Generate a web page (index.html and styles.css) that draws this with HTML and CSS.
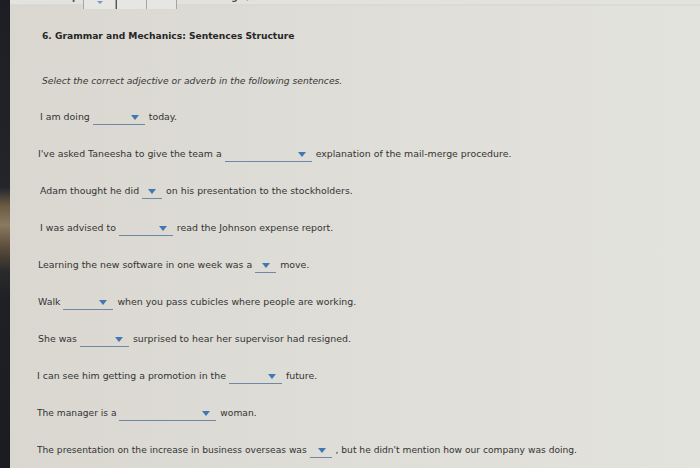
FILE: index.html
```html
<!DOCTYPE html>
<html>
<head>
<meta charset="utf-8">
<link rel="stylesheet" href="styles.css">
</head>
<body>
<div class="screen">
  <div class="bezel"></div>
  <div class="page">
    <div class="topbar">
      <div class="topinner">
        <span class="attempts">Attempts</span>
        <span class="cells"><span class="cell c1"><span class="mini"></span></span><span class="cell c2"></span><span class="cell c3"></span></span>
        <span class="average">Average / 10</span>
      </div>
    </div>
    <h1 class="title">6. Grammar and Mechanics: Sentences Structure</h1>
    <p class="instr">Select the correct adjective or adverb in the following sentences.</p>
    <div class="rows">
      <div class="row r1">I am doing <span class="dd w52"><i></i></span> today.</div>
      <div class="row r2">I've asked Taneesha to give the team a <span class="dd w87"><i></i></span> explanation of the mail-merge procedure.</div>
      <div class="row r3">Adam thought he did <span class="dd w20"><i></i></span> on his presentation to the stockholders.</div>
      <div class="row r4">I was advised to <span class="dd w54"><i></i></span> read the Johnson expense report.</div>
      <div class="row r5">Learning the new software in one week was a <span class="dd w21"><i></i></span> move.</div>
      <div class="row r6">Walk <span class="dd w50"><i></i></span> when you pass cubicles where people are working.</div>
      <div class="row r7">She was <span class="dd w49"><i></i></span> surprised to hear her supervisor had resigned.</div>
      <div class="row r8">I can see him getting a promotion in the <span class="dd w53"><i></i></span> future.</div>
      <div class="row r9">The manager is a <span class="dd w97"><i></i></span> woman.</div>
      <div class="row r10">The presentation on the increase in business overseas was <span class="dd w22"><i></i></span> , but he didn't mention how our company was doing.</div>
    </div>
  </div>
</div>
</body>
</html>
```
FILE: styles.css
```css
html, body {
  margin: 0;
  padding: 0;
  width: 700px;
  height: 468px;
  overflow: hidden;
}
.screen {
  display: flex;
  width: 700px;
  height: 468px;
  background: linear-gradient(90deg, #d9d7d0 0%, #dedcd6 40%, #e3e3de 100%);
}
.bezel {
  width: 10px;
  flex: 0 0 10px;
  background: linear-gradient(180deg, #1c1e24 0%, #23252b 40%, #6b5a44 44%, #8a7a60 48%, #5a4c3a 53%, #2a2a2c 58%, #1e2026 64%, #1a1c22 100%);
}
.page {
  flex: 1;
  padding-left: 28px;
  font-family: "DejaVu Sans", Verdana, sans-serif;
  color: #343434;
  font-size: 9px;
}
.topbar {
  height: 9px;
  overflow: hidden;
  margin-left: -28px;
  padding-left: 28px;
  background: linear-gradient(180deg, #e2e2de 0, #e2e2de 4px, #d5d4ce 5px, transparent 6px);
}
.topinner {
  display: flex;
  align-items: flex-end;
  margin-top: -7px;
  height: 16px;
}
.attempts {
  font-size: 9px;
  color: #4a4a4a;
  font-weight: bold;
  margin-left: 3px;
  width: 42px;
  line-height: 12px;
  position: relative;
  top: -6px;
}
.cells {
  display: flex;
  height: 16px;
}
.cell {
  display: block;
  height: 15px;
  border: 1px solid #a5a5a2;
  border-left: 0;
  background: #e6e6e3;
}
.c1 { width: 31px; border-left: 1px solid #a5a5a2; display: flex; justify-content: center; align-items: flex-end; }
.c2 { width: 29px; border-left: 1px solid #555; }
.c3 { width: 29px; }
.mini {
  width: 0; height: 0;
  border-left: 3px solid transparent;
  border-right: 3px solid transparent;
  border-top: 3px solid #7f95c8;
  margin-bottom: 5px;
}
.average {
  margin-left: 25px;
  font-size: 9px;
  font-weight: bold;
  color: #4a4a4a;
  line-height: 12px;
  position: relative;
  top: -6px;
}
.title {
  margin: 21px 0 0 4px;
  font-size: 9.15px;
  font-weight: bold;
  line-height: 12px;
  color: #262626;
}
.instr {
  margin: 33px 0 0 4px;
  font-style: italic;
  font-size: 9.2px;
  line-height: 12px;
  color: #383838;
}
.rows {
  display: flex;
  flex-direction: column;
  gap: 25px;
  margin-top: 24px;
}
.row {
  line-height: 12px;
  height: 12px;
  white-space: nowrap;
  font-size: 9.4px;
}
.r1, .r3, .r4 { margin-left: 2px; }
.r8, .r9, .r10 { margin-left: -1px; }
.r9, .r10 { font-size: 9.15px; }
.dd {
  display: inline-flex;
  justify-content: flex-end;
  align-items: flex-start;
  height: 8px;
  vertical-align: 0;
  border-bottom: 1px solid #6f88a6;
  padding-right: 6px;
  box-sizing: border-box;
  margin: 0 1px 0 0;
}
.dd i {
  display: block;
  width: 0; height: 0;
  border-left: 4.5px solid transparent;
  border-right: 4.5px solid transparent;
  border-top: 5px solid #3f78b4;
  margin-top: -2px;
}
.w52 { width: 52px; }
.w87 { width: 87px; }
.w20 { width: 20px; }
.w54 { width: 54px; }
.w21 { width: 21px; }
.w50 { width: 50px; }
.w49 { width: 49px; }
.w53 { width: 53px; }
.w97 { width: 97px; }
.w22 { width: 22px; }
```
